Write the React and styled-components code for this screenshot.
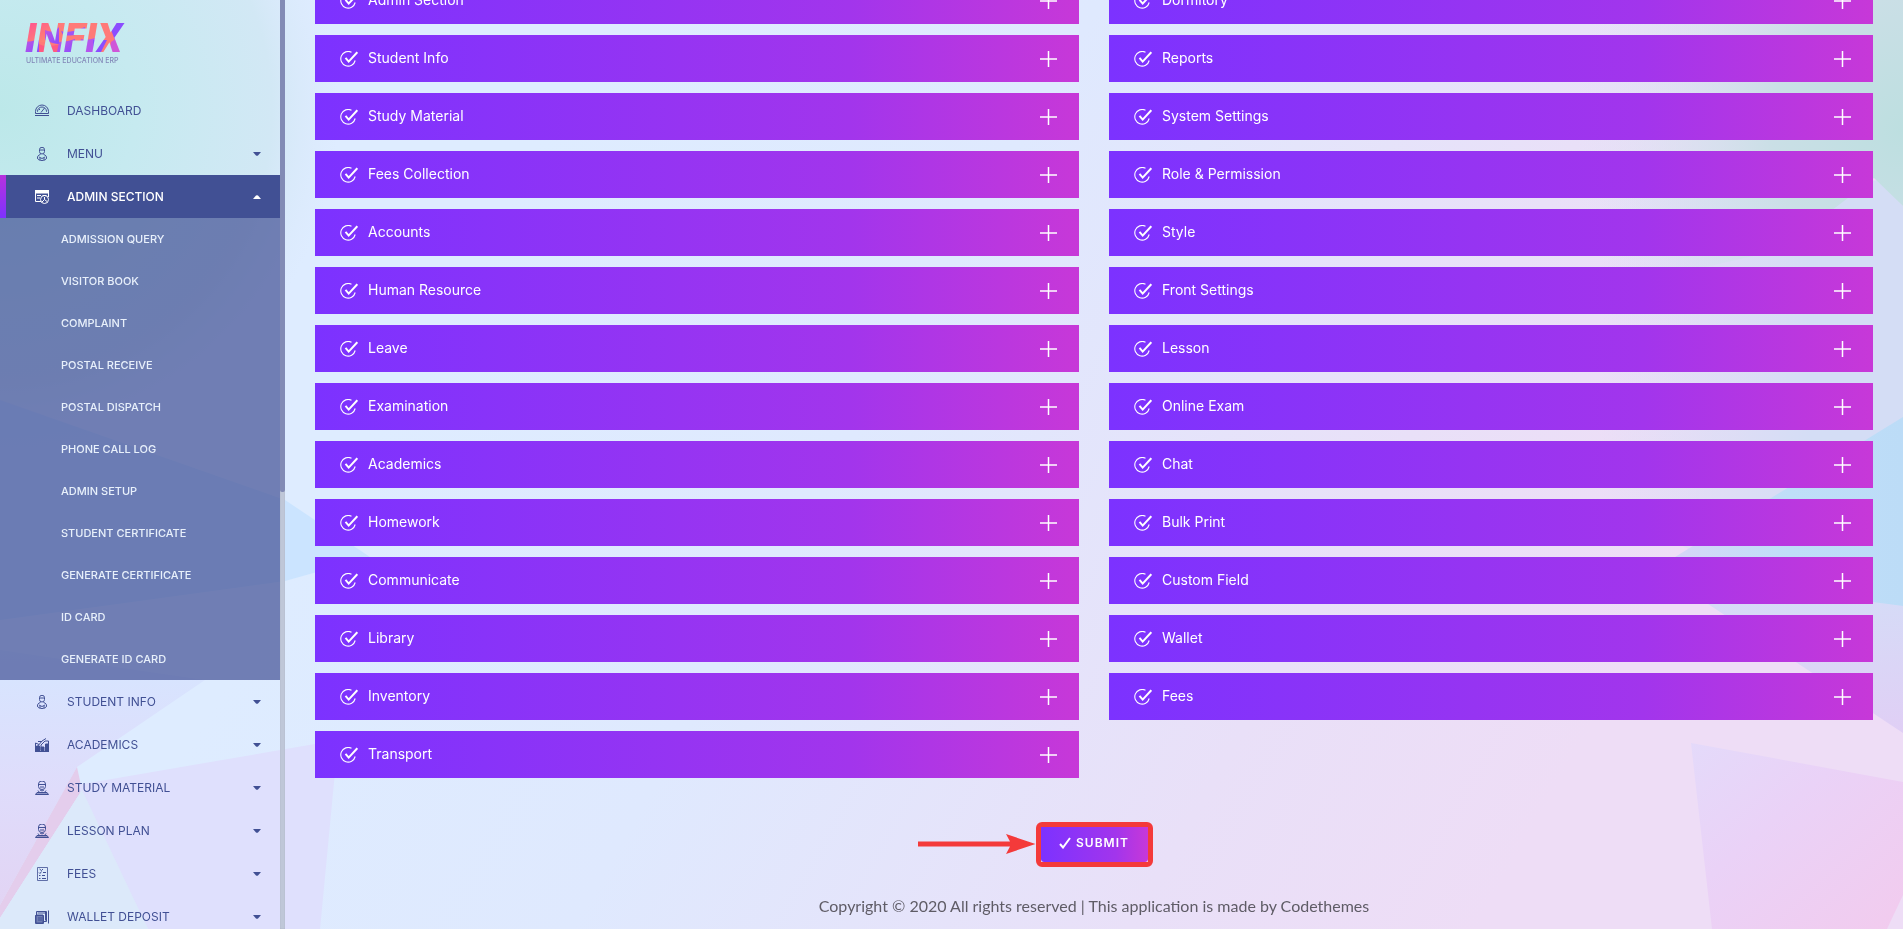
import React from 'react'
import styled, { createGlobalStyle, css } from 'styled-components'

const menuTop = [
  { label: 'Dashboard', icon: 'gauge' },
  { label: 'Menu', icon: 'person', caret: true },
]

const adminLinks = [
  'Admission Query',
  'Visitor Book',
  'Complaint',
  'Postal Receive',
  'Postal Dispatch',
  'Phone Call Log',
  'Admin Setup',
  'Student Certificate',
  'Generate Certificate',
  'ID Card',
  'Generate ID Card',
]

const menuBottom = [
  { label: 'Student Info', icon: 'person', caret: true },
  { label: 'Academics', icon: 'books', caret: true },
  { label: 'Study Material', icon: 'reader', caret: true },
  { label: 'Lesson Plan', icon: 'reader', caret: true },
  { label: 'Fees', icon: 'sheet', caret: true },
  { label: 'Wallet Deposit', icon: 'wallet', caret: true },
]

const leftModules = [
  'Admin Section',
  'Student Info',
  'Study Material',
  'Fees Collection',
  'Accounts',
  'Human Resource',
  'Leave',
  'Examination',
  'Academics',
  'Homework',
  'Communicate',
  'Library',
  'Inventory',
  'Transport',
]

const rightModules = [
  'Dormitory',
  'Reports',
  'System Settings',
  'Role & Permission',
  'Style',
  'Front Settings',
  'Lesson',
  'Online Exam',
  'Chat',
  'Bulk Print',
  'Custom Field',
  'Wallet',
  'Fees',
]

export default function App() {
  return (
    <>
      <GlobalStyle />
      <Backdrop />
      <Page>
        <Sidebar>
          <Menu aria-label="Main menu">
            <Brand href="#home">
              <Logo />
              <Tagline>ULTIMATE EDUCATION ERP</Tagline>
            </Brand>
            {menuTop.map(item => <MenuItem key={item.label} {...item} />)}
            <MenuItem label="Admin Section" icon="admin" caret active />
            <SubMenu>
              {adminLinks.map(link => (
                <li key={link}>
                  <SubLink href="#admin">{link}</SubLink>
                </li>
              ))}
            </SubMenu>
            {menuBottom.map(item => <MenuItem key={item.label} {...item} />)}
          </Menu>
          <ScrollTrack>
            <ScrollThumb />
          </ScrollTrack>
        </Sidebar>
        <Main>
          <Content>
            <Modules>
              <ModuleList items={leftModules} />
              <ModuleList items={rightModules} />
            </Modules>
            <Actions>
              <Highlight>
                <Arrow viewBox="0 0 118 20" aria-hidden="true">
                  <path d="M0 7.500h92L88 0l29.500 10L88 20l4-7.500H0z" />
                </Arrow>
                <SubmitButton type="submit">
                  <svg width="12" height="12" viewBox="0 0 12 12" aria-hidden="true">
                    <path d="M1 7l3 3.500L11 1" />
                  </svg>
                  SUBMIT
                </SubmitButton>
              </Highlight>
            </Actions>
            <Footer>Copyright © 2020 All rights reserved | This application is made by Codethemes</Footer>
          </Content>
        </Main>
      </Page>
    </>
  )
}

function MenuItem({ label, icon, caret, active }) {
  return (
    <MenuButton type="button" $active={active} aria-expanded={caret ? !!active : undefined}>
      <MenuIcon name={icon} />
      <MenuLabel>{label}</MenuLabel>
      {caret && (
        <svg width="8" height="4" viewBox="0 0 8 4" aria-hidden="true">
          <path d={active ? 'M0 4L3 0.500Q4 -0.200 5 0.500L8 4z' : 'M0 0h8L5 3.500Q4 4.200 3 3.500z'} fill="currentColor" />
        </svg>
      )}
    </MenuButton>
  )
}

function ModuleList({ items }) {
  return (
    <Column>
      {items.map(item => (
        <ModuleButton type="button" key={item} aria-expanded="false">
          <svg width="18" height="16" viewBox="0 0 18 16" aria-hidden="true">
            <path d="M11.500 1.300A7.300 7.300 0 1 0 15.200 9.500" strokeWidth="1.100" />
            <path d="M5.500 6.800L8.700 10.600L17.300 1.200" strokeWidth="2" />
          </svg>
          <span>{item}</span>
          <svg width="17" height="16" viewBox="0 0 17 16" aria-hidden="true">
            <path d="M0 8h17M8.500 0v16" strokeWidth="1.500" />
          </svg>
        </ModuleButton>
      ))}
    </Column>
  )
}

function MenuIcon({ name }) {
  const shapes = {
    gauge: (
      <>
        <path d="M0.500 9.500V7.500a6.500 6.500 0 0 1 13 0v2z" />
        <path d="M2.500 8V7.500a4.500 4.500 0 0 1 9 0V8M6 8.500L9.500 4M4 5l1 1M0 11.500h14" />
      </>
    ),
    person: (
      <>
        <path d="M4.500 2.500a2.500 2.200 0 0 1 5 0v2a2.500 2.500 0 0 1-5 0zM4.500 3h5" />
        <path d="M5.500 7.500C3 8 2.500 9.500 2.500 11c0 1.500 2 2.500 4.500 2.500s4.500-1 4.500-2.500c0-1.500-.5-3-3-3.500M4 10l3 1.500L10 10M5 13v-2M9 13v-2" />
      </>
    ),
    admin: (
      <>
        <path d="M0 0h14v3.500H0z" fill="currentColor" stroke="none" />
        <path d="M0.500 1v10.500H6M13.500 1v6M2 5.500h4M7.500 5.500h4M2 8h3" />
        <circle cx="9.500" cy="9.500" r="4" />
        <path d="M9.500 7v2.500L7 12M9.500 9.500l2.500 2" />
      </>
    ),
    books: (
      <>
        <path d="M1.500 8h3v5h-3zM6 9h3v4H6zM10.500 6H13v7h-2.500z" fill="currentColor" />
        <path d="M0.500 13.500V5L4 6.500M3 3.500h4M2 9l5-6 4-2.500M6 12V7l4-4h3.500v10M0 13.500h14" />
      </>
    ),
    reader: (
      <>
        <path d="M3.500 3a3.500 3 0 0 1 7 0v2.500a3.500 3 0 0 1-7 0zM4 3.500h6M5 6h4M5 9l2 1 2-1M3 9.500l1.500 2M11 9.500l-1.500 2M5 11.500h4" />
        <path d="M0.500 13.500h13l-1.500-2H2z" fill="currentColor" fillOpacity="0.500" />
      </>
    ),
    sheet: (
      <>
        <path d="M2.500 0.500h10v13h-10z" strokeOpacity="0.800" />
        <path d="M4.500 2l2 1.500L8 2M4 5.500l1 1 1.500-2M8 5.500h3M4 8.500h1.500M7 8.500h3M4 11.500h1.500M7 11.500h4" />
      </>
    ),
    wallet: (
      <>
        <path d="M1 5h7v8H1z" fill="currentColor" fillOpacity="0.700" />
        <path d="M0.500 5.500v8h8v-8zM1.500 5V1.500h10v10H9M2.500 3h8M10.500 1.500v9M4 7v4M6 7v4M13.500 0.500v13" />
      </>
    ),
  }
  return (
    <svg width="14" height="14" viewBox="0 0 14 14" fill="none" stroke="currentColor" aria-hidden="true">
      {shapes[name]}
    </svg>
  )
}

function Logo() {
  return (
    <svg width="108" height="30" viewBox="0 0 108 30" role="img" aria-label="Infix">
      <defs>
        <linearGradient id="warm" x1="0" y1="0" x2="1" y2="1">
          <stop offset="0" stopColor="#ff5093" />
          <stop offset="1" stopColor="#ff8f6b" />
        </linearGradient>
        <linearGradient id="cool" x1="0" y1="0" x2="1" y2="1">
          <stop offset="0" stopColor="#c455e0" />
          <stop offset="1" stopColor="#8b4dff" />
        </linearGradient>
        <pattern id="paint" width="108" height="30" patternUnits="userSpaceOnUse">
          <rect width="108" height="30" fill="#ff7a78" />
          <path d="M0 0h30v20H0z" fill="url(#warm)" />
          <path d="M0 19q8 2 14-4v15H0z" fill="url(#cool)" />
          <path d="M20 8q8 4 14-3v17q-6 0-14-4z" fill="url(#cool)" />
          <path d="M14 22q6 4 22 0v8H14z" fill="#ff5a82" />
          <path d="M36 9q8 3 24-4v4q-8 6-22 4z" fill="#a053f8" />
          <path d="M34 20q8 0 16-3v13H32z" fill="url(#cool)" />
          <path d="M56 17q6 2 14-1v14H54z" fill="#b455ee" />
          <path d="M68 18h14l-6 12h-8zM86 8L92 0h16L90 18z" fill="#8b4dff" />
          <path d="M86 20l6-4 10 14H84z" fill="#cf56d8" />
        </pattern>
      </defs>
      <LogoText x="0" y="30" fill="url(#paint)">INFIX</LogoText>
    </svg>
  )
}

// faceted wallpaper, stretched over the window
function Backdrop() {
  return (
    <Wallpaper viewBox="0 0 1903 929" preserveAspectRatio="none" aria-hidden="true">
      <defs>
        <linearGradient id="base" gradientUnits="userSpaceOnUse" x1="500" y1="200" x2="1550" y2="800">
          <stop offset="0" stopColor="#deecff" />
          <stop offset="0.350" stopColor="#dfe9fe" />
          <stop offset="0.750" stopColor="#e9e0f8" />
          <stop offset="1" stopColor="#eeddf6" />
        </linearGradient>
        <radialGradient id="mintLeft" gradientUnits="userSpaceOnUse" cx="0" cy="110" r="340">
          <stop offset="0" stopColor="#bce8e9" />
          <stop offset="0.400" stopColor="#c6eaf0" />
          <stop offset="0.800" stopColor="#d2e8f5" />
          <stop offset="1" stopColor="#dbe9fb" stopOpacity="0" />
        </radialGradient>
        <radialGradient id="mintRight" gradientUnits="userSpaceOnUse" cx="1903" cy="130" r="330">
          <stop offset="0" stopColor="#bddfe0" />
          <stop offset="0.400" stopColor="#cadfe6" />
          <stop offset="1" stopColor="#dfe2f5" stopOpacity="0" />
        </radialGradient>
        <linearGradient id="sky" x1="0" y1="0" x2="1" y2="0">
          <stop offset="0" stopColor="#d6d6f7" />
          <stop offset="0.500" stopColor="#bfdef8" />
          <stop offset="1" stopColor="#bcdcf7" />
        </linearGradient>
        <linearGradient id="dusk" gradientUnits="userSpaceOnUse" x1="1600" y1="320" x2="1903" y2="320">
          <stop offset="0" stopColor="#d4ddf5" stopOpacity="0" />
          <stop offset="0.700" stopColor="#d4ddf5" />
        </linearGradient>
        <linearGradient id="haze" x1="0" y1="0" x2="0" y2="1">
          <stop offset="0" stopColor="#d6dbf7" />
          <stop offset="1" stopColor="#e0cff5" />
        </linearGradient>
        <linearGradient id="rose" x1="0" y1="0" x2="1" y2="1">
          <stop offset="0" stopColor="#e4dafa" />
          <stop offset="0.400" stopColor="#ead2f7" />
          <stop offset="1" stopColor="#f2cbee" />
        </linearGradient>
        <linearGradient id="lilac" x1="0" y1="0" x2="0" y2="1">
          <stop offset="0" stopColor="#d6e6ff" />
          <stop offset="0.550" stopColor="#dfdcfb" />
          <stop offset="1" stopColor="#e2d4f4" />
        </linearGradient>
      </defs>
      <rect width="1903" height="929" fill="url(#base)" />
      <rect width="340" height="450" fill="url(#mintLeft)" />
      <path d="M1600 200L1880 180L1903 206V460L1690 550L1600 500z" fill="url(#dusk)" />
      <path d="M1560 0H1903V206L1874 178L1780 250L1560 300z" fill="url(#mintRight)" />
      <path d="M0 400L285 500L370 557L285 581L0 620z" fill="#c6e2ff" fillOpacity="0.800" />
      <path d="M0 650L205 680L77 767L0 905z" fill="url(#lilac)" />
      <path d="M0 905L77 767L82 790L0 918z" fill="#e4cdec" />
      <path d="M77 785L338 740L320 929H148z" fill="#dfe0fd" />
      <path d="M82 790L0 918V929H148z" fill="#dce9fa" />
      <path d="M1903 417L1675 557L1708 604L1903 606z" fill="url(#sky)" />
      <path d="M1708 604L1873 602L1903 606V733z" fill="url(#haze)" />
      <path d="M1691 743L1903 782V895L1887 929H1712z" fill="url(#rose)" />
    </Wallpaper>
  )
}

const GlobalStyle = createGlobalStyle`
  * {
    box-sizing: border-box;
  }
  body {
    margin: 0;
    font-family: Inter, "Open Sans", sans-serif;
  }
  button {
    font-family: inherit;
    cursor: pointer;
  }
`

const Wallpaper = styled.svg`
  position: fixed;
  inset: 0;
  width: 100%;
  height: 100%;
  z-index: -1;
`

const Page = styled.div`
  display: grid;
  grid-template-columns: 285px 1fr;
  height: 100vh;
`

const Sidebar = styled.aside`
  display: flex;
  min-height: 0;
`

const Menu = styled.nav`
  flex: 1;
  overflow-y: auto;
  scrollbar-width: none;
`

const ScrollTrack = styled.div`
  width: 5px;
  background: #bfc7d8;
  box-shadow: inset 0 0 1px #8d97b0;
`

const ScrollThumb = styled.div`
  height: 53%;
  border-radius: 0 0 2px 2px;
  background: #828bb5;
`

const Brand = styled.a`
  display: flex;
  flex-direction: column;
  gap: 4px;
  height: 89px;
  padding: 22px 25px 0;
  text-decoration: none;
`

const LogoText = styled.text`
  font-family: Roboto, sans-serif;
  font-size: 40px;
  font-weight: 900;
  font-style: italic;
`

const Tagline = styled.span`
  padding-left: 1px;
  font-size: 7px;
  line-height: 10px;
  font-weight: 500;
  color: #8288b8;
`

const MenuButton = styled.button`
  display: flex;
  align-items: center;
  gap: 18px;
  width: 100%;
  height: 43px;
  padding: 0 19px 0 35px;
  border: 0;
  background: none;
  color: #415094;
  font-size: 12px;
  text-align: left;
  text-transform: uppercase;
  ${p => p.$active && css`
    padding-left: 29px;
    border-left: 6px solid;
    border-image: linear-gradient(#b832dc, #7c32ff) 1;
    background: #415094;
    color: #fff;
    font-weight: 500;
  `}
`

const MenuLabel = styled.span`
  flex: 1;
`

const SubMenu = styled.ul`
  margin: 0;
  padding: 0;
  list-style: none;
  background: rgba(65, 80, 148, 0.7);
`

const SubLink = styled.a`
  display: block;
  padding-left: 61px;
  color: #e8f0fb;
  font-size: 11px;
  font-weight: 500;
  line-height: 42px;
  text-decoration: none;
  text-transform: uppercase;
`

// column-reverse keeps the page resting at the bottom of its scroll
const Main = styled.main`
  display: flex;
  flex-direction: column-reverse;
  min-height: 0;
  overflow-y: auto;
  scrollbar-width: none;
`

const Content = styled.div`
  padding: 0 30px 11px;
`

const Modules = styled.div`
  display: grid;
  grid-template-columns: 1fr 1fr;
  gap: 30px;
`

const Column = styled.div`
  display: flex;
  flex-direction: column;
  gap: 11px;
`

const ModuleButton = styled.button`
  display: flex;
  align-items: center;
  gap: 10px;
  height: 47px;
  padding: 0 22px 0 25px;
  border: 0;
  background: linear-gradient(90deg, #7c32ff 0%, #a235ec 70%, #c738d8 100%);
  color: #fff;
  font-size: 14px;
  text-align: left;
  span {
    flex: 1;
    padding-bottom: 2px;
  }
  svg {
    fill: none;
    stroke: #fff;
  }
`

const Actions = styled.div`
  display: flex;
  justify-content: center;
  margin: 44px 0 27px;
`

const Highlight = styled.div`
  position: relative;
  border: 5px solid #f43a3a;
  border-radius: 6px;
  background: #fff;
`

const Arrow = styled.svg`
  position: absolute;
  right: 100%;
  top: 7px;
  width: 118px;
  height: 20px;
  margin-right: 5px;
  fill: #f43a3a;
`

const SubmitButton = styled.button`
  display: flex;
  align-items: center;
  justify-content: center;
  gap: 5px;
  width: 107px;
  height: 35px;
  padding: 0 0 4px;
  border: 0;
  border-radius: 0 0 3px 3px;
  background: linear-gradient(90deg, #7c32ff 0%, #a235ec 70%, #c738d8 100%);
  color: #fff;
  font-size: 12px;
  font-weight: 600;
  letter-spacing: 1px;
  svg {
    fill: none;
    stroke: #fff;
    stroke-width: 2;
  }
`

const Footer = styled.footer`
  color: #5f5c66;
  font-family: Lato, sans-serif;
  font-size: 16px;
  line-height: 24px;
  text-align: center;
`
